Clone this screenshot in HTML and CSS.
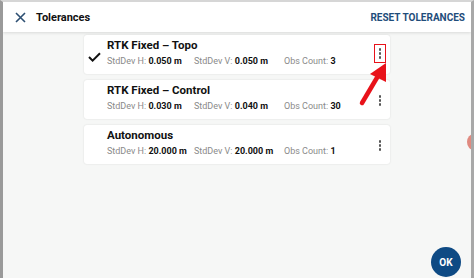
FILE: index.html
```html
<!DOCTYPE html>
<html lang="en">
<head>
    <meta charset="UTF-8">
    <meta name="viewport" content="width=device-width, initial-scale=1.0">
    <title>Tolerances</title>
    <link rel="stylesheet" href="styles.css">
</head>
<body>
    <div class="frame">
        <header class="topbar">
            <div class="topbar-left">
                <svg class="close" width="11" height="11" viewBox="0 0 11 11">
                    <path d="M1 1 L10 10 M10 1 L1 10" stroke="#2d4f72" stroke-width="1.6" fill="none"/>
                </svg>
                <span class="title">Tolerances</span>
            </div>
            <span class="reset">RESET TOLERANCES</span>
        </header>

        <main class="list">
            <div class="card">
                <div class="check">
                    <svg width="13" height="10" viewBox="0 0 13 10">
                        <path d="M1 5 L4.6 8.6 L12 1.2" stroke="#111" stroke-width="2" fill="none"/>
                    </svg>
                </div>
                <div class="info">
                    <div class="name">RTK Fixed – Topo</div>
                    <div class="stats">
                        <span><em>StdDev H:</em> <b>0.050 m</b></span>
                        <span><em>StdDev V:</em> <b>0.050 m</b></span>
                        <span><em>Obs Count:</em> <b>3</b></span>
                    </div>
                </div>
                <div class="more highlight">
                    <i></i><i></i><i></i>
                </div>
            </div>

            <div class="card">
                <div class="check"></div>
                <div class="info">
                    <div class="name">RTK Fixed – Control</div>
                    <div class="stats">
                        <span><em>StdDev H:</em> <b>0.030 m</b></span>
                        <span><em>StdDev V:</em> <b>0.040 m</b></span>
                        <span><em>Obs Count:</em> <b>30</b></span>
                    </div>
                </div>
                <div class="more">
                    <i></i><i></i><i></i>
                </div>
            </div>

            <div class="card">
                <div class="check"></div>
                <div class="info">
                    <div class="name">Autonomous</div>
                    <div class="stats">
                        <span><em>StdDev H:</em> <b>20.000 m</b></span>
                        <span><em>StdDev V:</em> <b>20.000 m</b></span>
                        <span><em>Obs Count:</em> <b>1</b></span>
                    </div>
                </div>
                <div class="more">
                    <i></i><i></i><i></i>
                </div>
            </div>
        </main>

        <!-- annotation arrow pointing at the menu button -->
        <svg class="arrow" width="34" height="46" viewBox="0 0 34 46">
            <path d="M5 42 L21 15" stroke="#e8121a" stroke-width="4.5" stroke-linecap="round" fill="none"/>
            <path d="M13 13 L29 2 L29 21 Z" fill="#e8121a"/>
        </svg>

        <div class="side-tab"></div>
        <button class="ok">OK</button>
    </div>
</body>
</html>
```

FILE: styles.css
```css
html, body {
    margin: 0;
    padding: 0;
}
body {
    font-family: Roboto, "Liberation Sans", sans-serif;
    background-color: #ffffff;
    width: 474px;
    height: 278px;
    overflow: hidden;
}
.frame {
    position: relative;
    box-sizing: border-box;
    height: 278px;
    background-color: #f6f7f6;
    border-top: 2px solid #d6d6d6;
    border-left: 3px solid #9a9a9a;
    border-right: 3px solid #a8a8a8;
    overflow: hidden;
}
.topbar {
    height: 30px;
    background-color: #ffffff;
    display: flex;
    align-items: center;
    justify-content: space-between;
    padding: 0 6px 0 12px;
    box-shadow: 0 1px 3px rgba(0, 0, 0, 0.12);
}
.topbar-left {
    display: flex;
    align-items: center;
}
.close {
    margin-right: 10px;
}
.title {
    font-size: 11px;
    font-weight: bold;
    color: #111;
}
.reset {
    font-size: 10px;
    font-weight: bold;
    color: #1f4d7a;
}
.list {
    display: flex;
    flex-direction: column;
    gap: 6px;
    width: 306px;
    margin: 3px 0 0 81px;
}
.card {
    display: flex;
    align-items: flex-start;
    box-sizing: border-box;
    height: 39px;
    padding-top: 4px;
    background-color: #ffffff;
    border-radius: 3px;
    box-shadow: 0 0 2px rgba(0, 0, 0, 0.12);
}
.check {
    width: 19px;
    padding-left: 4px;
    padding-top: 8px;
}
.info {
    flex: 1;
}
.name {
    font-size: 11.5px;
    line-height: 13px;
    font-weight: bold;
    color: #111;
    margin-bottom: 4px;
}
.stats {
    display: grid;
    grid-template-columns: 87px 90px auto;
    font-size: 9px;
    line-height: 11px;
}
.stats em {
    font-style: normal;
    color: #8a8a8a;
}
.stats b {
    color: #111;
}
.more {
    display: flex;
    flex-direction: column;
    gap: 1.5px;
    align-items: center;
    width: 10px;
    padding: 3px 0;
    margin: 8px 5px 0 0;
}
.more i {
    width: 2.5px;
    height: 2.5px;
    border-radius: 50%;
    background-color: #555;
}
.highlight {
    outline: 1.5px solid #e8121a;
    margin-top: 6px;
}
.arrow {
    position: absolute;
    left: 354px;
    top: 59px;
}
.side-tab {
    position: absolute;
    right: -10px;
    top: 132px;
    width: 14px;
    height: 16px;
    border-radius: 50%;
    background-color: #e08a80;
}
.ok {
    position: absolute;
    right: 10px;
    bottom: 1px;
    width: 30px;
    height: 30px;
    border-radius: 50%;
    border: none;
    background-color: #0e4a84;
    color: #ffffff;
    font-family: Roboto, "Liberation Sans", sans-serif;
    font-size: 10px;
    font-weight: bold;
    padding: 0;
}
```
